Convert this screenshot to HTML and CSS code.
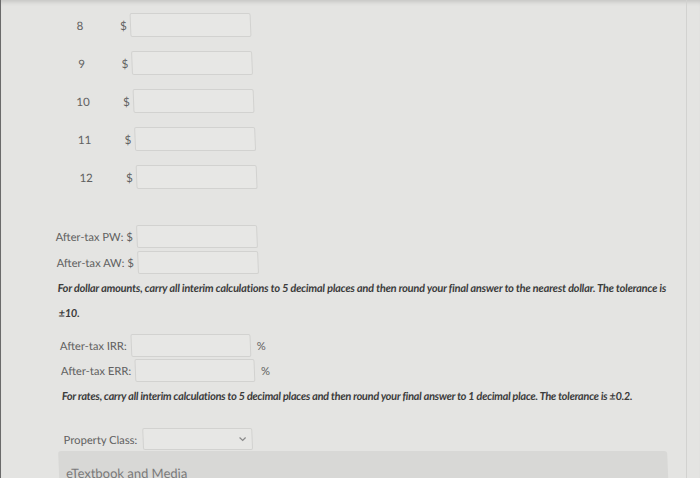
FILE: index.html
```html
<!DOCTYPE html>
<html>
<head>
<meta charset="utf-8">
<link rel="stylesheet" href="styles.css">
</head>
<body>
<div class="frame">
  <div class="content">
    <div class="rows">
      <div class="row"><span class="num">8</span><span class="dollar">$</span><span class="box"></span></div>
      <div class="row"><span class="num">9</span><span class="dollar">$</span><span class="box"></span></div>
      <div class="row"><span class="num">10</span><span class="dollar">$</span><span class="box"></span></div>
      <div class="row"><span class="num">11</span><span class="dollar">$</span><span class="box"></span></div>
      <div class="row"><span class="num">12</span><span class="dollar">$</span><span class="box"></span></div>
    </div>
    <div class="pair">
      <div class="line"><span class="lbl">After-tax PW: $</span><span class="box"></span></div>
      <div class="line"><span class="lbl">After-tax AW: $</span><span class="box"></span></div>
    </div>
    <p class="note">For dollar amounts, carry all interim calculations to 5 decimal places and then round your final answer to the nearest dollar. The tolerance is ±10.</p>
    <div class="pair rates">
      <div class="line"><span class="lbl">After-tax IRR:</span><span class="box"></span><span class="pct">%</span></div>
      <div class="line"><span class="lbl">After-tax ERR:</span><span class="box"></span><span class="pct">%</span></div>
    </div>
    <p class="note note2">For rates, carry all interim calculations to 5 decimal places and then round your final answer to 1 decimal place. The tolerance is ±0.2.</p>
    <div class="line prop">
      <span class="lbl">Property Class:</span>
      <span class="select"><svg class="chev" width="8" height="6" viewBox="0 0 8 6"><path d="M1 1.5 L4 4.5 L7 1.5" fill="none" stroke="#8a8a8a" stroke-width="1.2"/></svg></span>
    </div>
    <div class="media"><span class="media-text">eTextbook and Media</span></div>
  </div>
  <div class="rborder"></div>
</div>
</body>
</html>
```
FILE: styles.css
```css
html, body {
  margin: 0;
  padding: 0;
}
body {
  width: 700px;
  height: 478px;
  overflow: hidden;
  background: #e4e4e2;
  font-family: Lato, "Open Sans", sans-serif;
  color: #606060;
}
.frame {
  position: relative;
  height: 478px;
  border-left: 1px solid #6a6a6a;
  box-shadow: inset 0 5px 4px -3px #c4c4c2;
  box-sizing: border-box;
}
.content {
  padding: 13px 0 0 45px;
  transform: skewX(2.3deg);
  transform-origin: 0 0;
}
.rows {
  display: flex;
  flex-direction: column;
  gap: 14px;
}
.row {
  display: flex;
  align-items: center;
  height: 24px;
}
.num {
  width: 24px;
  margin-left: 21px;
  text-align: center;
  font-size: 11.5px;
}
.dollar {
  margin-left: 28px;
  width: 10px;
  font-size: 11.5px;
}
.box {
  display: block;
  width: 121px;
  height: 23px;
  border: 1px solid #d2d2d0;
  background: #e7e7e5;
  border-radius: 2px;
  box-sizing: border-box;
}
.row .box {
  height: 24px;
}
.pair {
  margin-top: 36px;
  display: flex;
  flex-direction: column;
  gap: 3px;
}
.line {
  display: flex;
  align-items: center;
  gap: 4px;
  font-size: 11.2px;
}
.note {
  margin: 1px 0 0 0;
  width: 615px;
  font-style: italic;
  font-weight: 700;
  font-size: 11px;
  letter-spacing: -0.22px;
  line-height: 25px;
  color: #3c3c3c;
}
.note2 {
  letter-spacing: -0.3px;
}
.rates {
  margin-top: 9px;
  gap: 2px;
}
.rates .box {
  width: 120px;
}
.pct {
  margin-left: 2px;
  font-size: 11px;
}
.prop {
  margin-top: 20px;
  gap: 5px;
}
.select {
  display: flex;
  align-items: center;
  justify-content: flex-end;
  width: 110px;
  height: 22px;
  border: 1px solid #d2d2d0;
  border-radius: 2px;
  background: #e7e7e5;
  box-sizing: border-box;
  padding-right: 5px;
}
.media {
  margin: 1px 0 0 -6px;
  width: 609px;
  height: 40px;
  background: #d8d8d6;
  border-radius: 3px 3px 0 0;
  padding: 11px 0 0 7px;
  box-sizing: border-box;
}
.media-text {
  font-size: 13px;
  color: #7a7a7a;
}
.rborder {
  position: absolute;
  top: 0;
  left: 685px;
  width: 1px;
  height: 478px;
  background: #d2d2d0;
}
```
